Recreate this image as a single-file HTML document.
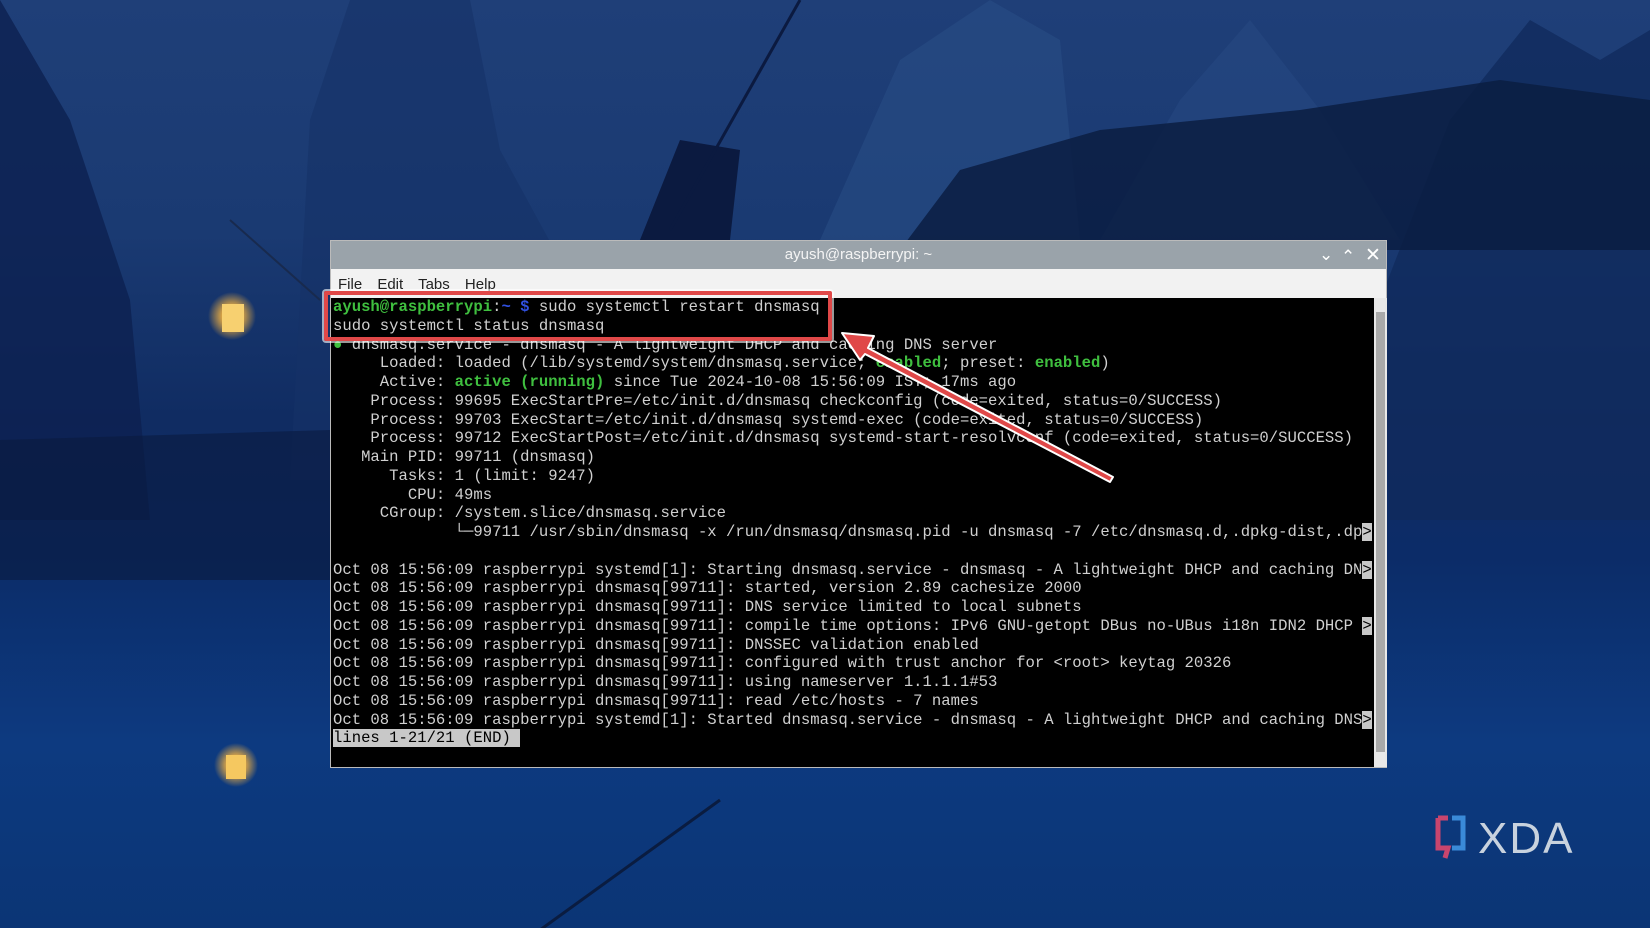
<!DOCTYPE html>
<html><head><meta charset="utf-8"><style>
*{margin:0;padding:0;box-sizing:border-box}
body{width:1650px;height:928px;overflow:hidden;position:relative;background:linear-gradient(180deg,#1f3f78 0%,#1a3a72 25%,#102c62 45%,#0c2c68 60%,#0d3a80 80%,#0b3575 100%);font-family:"Liberation Sans",sans-serif}
.bg{position:absolute;left:0;top:0}
.win{position:absolute;left:330px;top:240px;width:1057px;height:528px;background:#ededed;border:1px solid #bbb}
.title{height:28px;background:#9aa3aa;color:#f4f4f4;font-size:15px;text-align:center;line-height:28px}
.menu{height:29px;background:#f2f2f2;font-size:15px;color:#222;line-height:31px;padding-left:7px;word-spacing:11px}
.term{position:absolute;left:0;top:57px;width:1043px;height:469px;background:#000}
.sb{position:absolute;left:1043px;top:57px;width:13px;height:469px;background:#e8e8e8}
.sb i{position:absolute;left:2px;top:14px;width:9px;height:440px;background:#a9a9a9}
pre{position:absolute;left:2px;top:0px;font-family:"Liberation Mono",monospace;font-size:15.6px;line-height:18.75px;color:#d0d0d0;white-space:pre}
.g{color:#3fbf3f;font-weight:bold}
.inv{background:#c8c8c8;color:#000}
.btn{position:absolute;top:4px;color:#fff;font-size:17px}
</style></head><body>
<svg class="bg" width="1650" height="928">
<defs><radialGradient id="lg" cx="0.5" cy="0.5" r="0.5"><stop offset="0" stop-color="#fff6c0"/><stop offset="0.35" stop-color="#f0b040"/><stop offset="1" stop-color="#f0b040" stop-opacity="0"/></radialGradient></defs>
<path d="M0 0 L0 520 L150 520 L130 300 L70 120 Z" fill="#0d2050" opacity="0.8"/>
<path d="M290 480 L310 120 L350 0 L470 0 L500 150 L560 260 L580 480 Z" fill="#163268" opacity="0.6"/>
<path d="M820 240 L900 60 L990 0 L1060 40 L1080 240 Z" fill="#2a4f88" opacity="0.5"/>
<path d="M1100 240 L1180 100 L1250 20 L1320 110 L1400 240 Z" fill="#284a84" opacity="0.5"/>
<path d="M1380 300 L1450 120 L1530 20 L1600 60 L1650 30 L1650 520 L1390 520 Z" fill="#102a5c" opacity="0.8"/>
<path d="M900 250 L960 170 L1100 130 L1300 110 L1500 80 L1650 100 L1650 250 Z" fill="#0b1d42" opacity="0.85"/>
<path d="M0 440 L330 430 L330 580 L0 580 Z" fill="#0a1a40" opacity="0.6"/>
<path d="M640 240 L680 140 L740 150 L730 240 Z" fill="#0b1a40"/>
<line x1="670" y1="230" x2="800" y2="0" stroke="#0b1a40" stroke-width="3"/>
<line x1="540" y1="930" x2="720" y2="800" stroke="#0a1c40" stroke-width="3"/>
<circle cx="232" cy="316" r="24" fill="url(#lg)"/>
<rect x="222" y="304" width="22" height="28" fill="#f7d070"/>
<circle cx="236" cy="765" r="22" fill="url(#lg)"/>
<rect x="226" y="755" width="20" height="24" fill="#f5c860"/>
<line x1="230" y1="220" x2="320" y2="300" stroke="#182a4e" stroke-width="2"/>
</svg>
<div class="win">
<div class="title">ayush@raspberrypi: ~</div>
<span class="btn" style="left:988px">&#8964;</span><span class="btn" style="left:1010px;top:6px">&#8963;</span><span class="btn" style="left:1034px;top:3px;font-size:19px">&#10005;</span>
<div class="menu">File Edit Tabs Help</div>
<div class="term"><pre><span class="g">ayush@raspberrypi</span>:<span style="color:#3050e0;font-weight:bold">~ $</span> sudo systemctl restart dnsmasq
sudo systemctl status dnsmasq
<span class="g">●</span> dnsmasq.service - dnsmasq - A lightweight DHCP and caching DNS server
     Loaded: loaded (/lib/systemd/system/dnsmasq.service; <span class="g">enabled</span>; preset: <span class="g">enabled</span>)
     Active: <span class="g">active (running)</span> since Tue 2024-10-08 15:56:09 IST; 17ms ago
    Process: 99695 ExecStartPre=/etc/init.d/dnsmasq checkconfig (code=exited, status=0/SUCCESS)
    Process: 99703 ExecStart=/etc/init.d/dnsmasq systemd-exec (code=exited, status=0/SUCCESS)
    Process: 99712 ExecStartPost=/etc/init.d/dnsmasq systemd-start-resolvconf (code=exited, status=0/SUCCESS)
   Main PID: 99711 (dnsmasq)
      Tasks: 1 (limit: 9247)
        CPU: 49ms
     CGroup: /system.slice/dnsmasq.service
             └─99711 /usr/sbin/dnsmasq -x /run/dnsmasq/dnsmasq.pid -u dnsmasq -7 /etc/dnsmasq.d,.dpkg-dist,.dp<span class="inv">&gt;</span>

Oct 08 15:56:09 raspberrypi systemd[1]: Starting dnsmasq.service - dnsmasq - A lightweight DHCP and caching DN<span class="inv">&gt;</span>
Oct 08 15:56:09 raspberrypi dnsmasq[99711]: started, version 2.89 cachesize 2000
Oct 08 15:56:09 raspberrypi dnsmasq[99711]: DNS service limited to local subnets
Oct 08 15:56:09 raspberrypi dnsmasq[99711]: compile time options: IPv6 GNU-getopt DBus no-UBus i18n IDN2 DHCP <span class="inv">&gt;</span>
Oct 08 15:56:09 raspberrypi dnsmasq[99711]: DNSSEC validation enabled
Oct 08 15:56:09 raspberrypi dnsmasq[99711]: configured with trust anchor for &lt;root&gt; keytag 20326
Oct 08 15:56:09 raspberrypi dnsmasq[99711]: using nameserver 1.1.1.1#53
Oct 08 15:56:09 raspberrypi dnsmasq[99711]: read /etc/hosts - 7 names
Oct 08 15:56:09 raspberrypi systemd[1]: Started dnsmasq.service - dnsmasq - A lightweight DHCP and caching DNS<span class="inv">&gt;</span>
<span class="inv">lines 1-21/21 (END) </span></pre></div>
<div class="sb"><i></i></div>
</div>
<div style="position:absolute;left:324px;top:291px;width:508px;height:50px;border:4px solid #e04848;border-radius:2px;box-shadow:0 0 0 2px rgba(255,255,255,.6)"></div>
<svg class="bg" width="1650" height="928" style="pointer-events:none">
<path d="M1113 477 L868 348 L874 336 L842 333 L860 360 L865 354 L1110 482 Z" fill="#e04848" stroke="#fff" stroke-width="2" stroke-linejoin="round"/>
<path d="M1438 818 H1448 M1438 818 V848 H1448 L1445 858" stroke="#c8456e" stroke-width="5" fill="none"/>
<path d="M1452 818 H1463 V848 H1452" stroke="#3a8ad8" stroke-width="5" fill="none"/>
<text x="1478" y="853" font-family="Liberation Sans" font-size="44" fill="#c8d2de" letter-spacing="2">XDA</text>
</svg>
</body></html>
